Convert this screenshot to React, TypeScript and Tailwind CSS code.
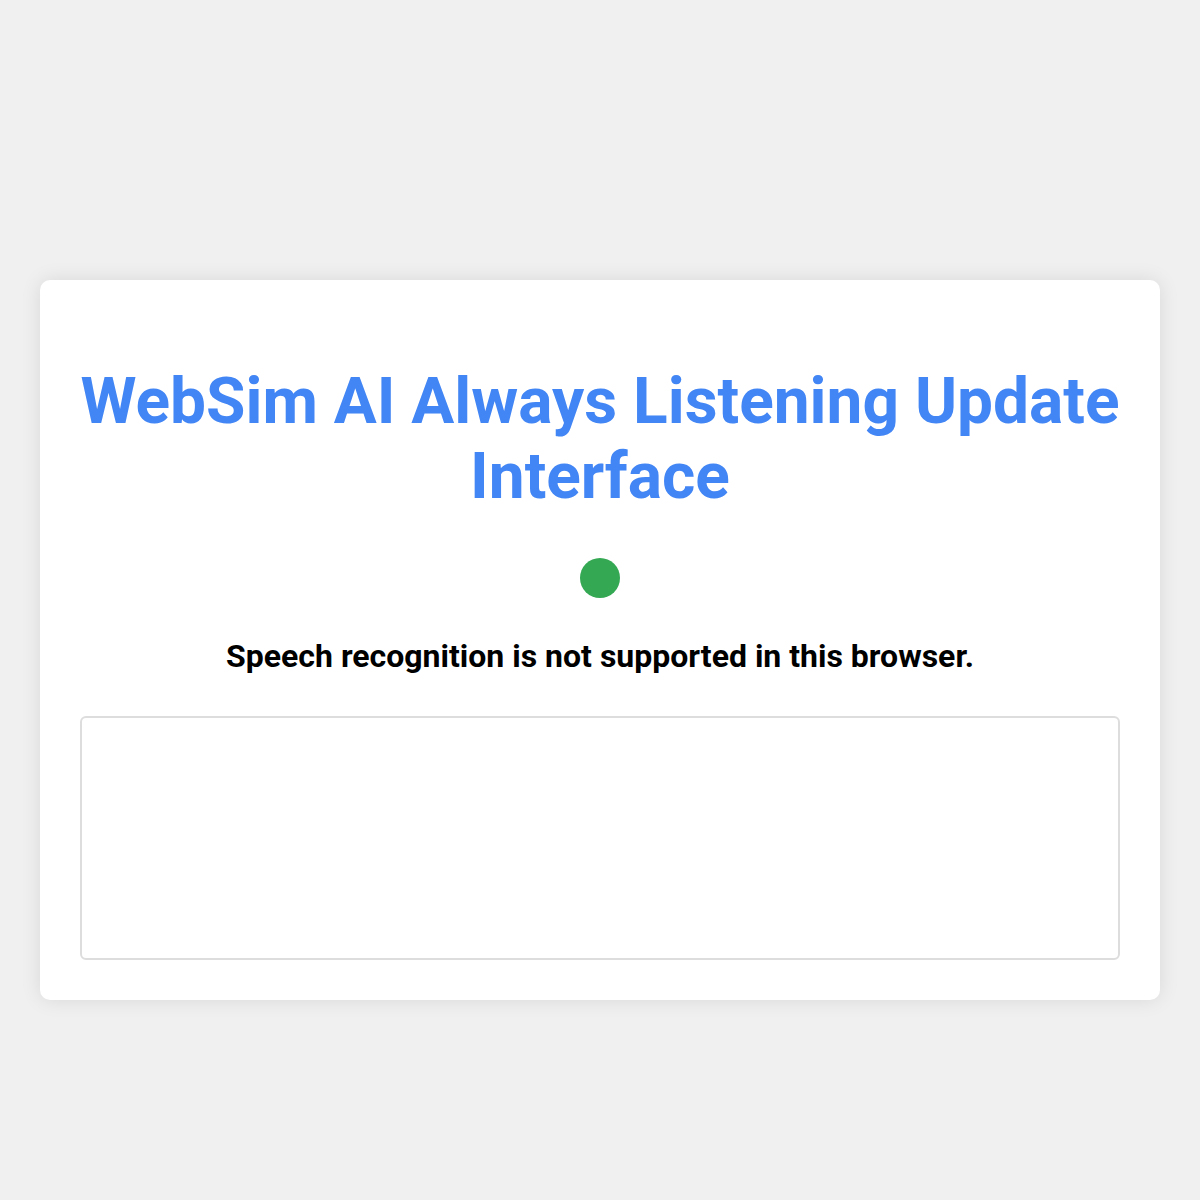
export default function App() {
  return (
    <div
      className="min-h-[1200px] bg-[#f0f0f0] flex items-center justify-center px-10 pt-20"
      style={{ fontFamily: "Roboto, 'Liberation Sans', sans-serif" }}
    >
      <div className="w-full bg-white rounded-[10px] shadow-[0_0_20px_rgba(0,0,0,0.1)] p-10 text-center">
        <h1 className="text-[64px] leading-[75px] font-bold text-[#4285f4] mt-[44px] mb-[44px]">
          WebSim AI Always Listening Update Interface
        </h1>
        <div className="w-10 h-10 rounded-full bg-[#34a853] mx-auto" />
        <p className="text-[32px] leading-[37.5px] font-bold text-black mt-10 mb-[41px]">
          Speech recognition is not supported in this browser.
        </p>
        <div className="h-[244px] border-2 border-[#ddd] rounded-[6px] p-5 text-left" />
      </div>
    </div>
  );
}
